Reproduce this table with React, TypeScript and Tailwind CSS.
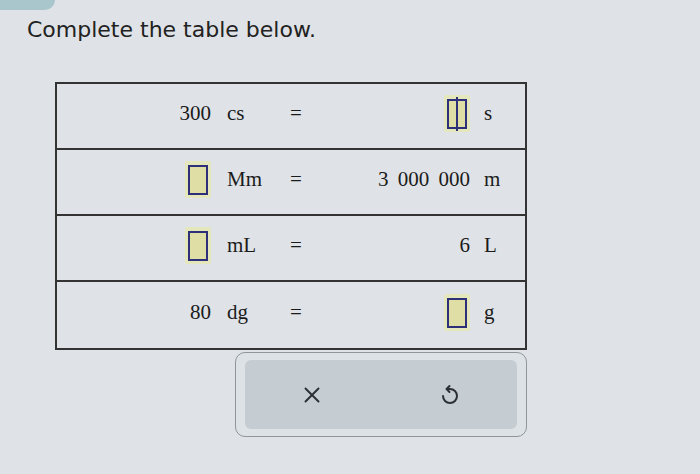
import { X } from 'lucide-react'

interface RowProps {
  leftValue: string | null
  leftUnit: string
  rightValue: string | null
  rightUnit: string
  dotted?: boolean
}

function AnswerBox({ dotted }: { dotted?: boolean }) {
  return (
    <span className="inline-flex items-center justify-center w-[26px] h-[37px] bg-[#e4e6bc] rounded-[2px]">
      <span className="relative block w-[20px] h-[30px] border-2 border-[#2d2f78] bg-[#dfdea4]">
        {dotted ? (
          <span className="absolute left-1/2 top-[-4px] bottom-[-4px] w-[2px] -translate-x-1/2 bg-[#2d2f78]" />
        ) : null}
      </span>
    </span>
  )
}

function UndoIcon() {
  return (
    <svg width="24" height="24" viewBox="0 0 24 24" fill="none" stroke="#2c3034" strokeWidth="2" strokeLinecap="round" strokeLinejoin="round">
      <path d="M9 6h3a7 7 0 1 1-7 7" />
      <path d="M11.5 3 8.5 6l3 3" />
    </svg>
  )
}

function Row({ leftValue, leftUnit, rightValue, rightUnit, dotted }: RowProps) {
  return (
    <div className="grid grid-cols-[154px_16px_47px_44px_152px_14px_1fr] items-center h-[66px] pb-[5px] border-b-2 border-[#333] last:border-b-0">
      <div className="flex justify-end">
        {leftValue ? <span>{leftValue}</span> : <AnswerBox />}
      </div>
      <div />
      <div>{leftUnit}</div>
      <div className="text-center">=</div>
      <div className="flex justify-end">
        {rightValue ? <span className="[word-spacing:4px]">{rightValue}</span> : <AnswerBox dotted={dotted} />}
      </div>
      <div />
      <div>{rightUnit}</div>
    </div>
  )
}

export default function App() {
  return (
    <div className="w-[700px] h-[474px] bg-[#dfe3e7] overflow-hidden relative">
      {/* cut-off tab at the top */}
      <div className="absolute left-0 top-[-20px] w-[55px] h-[30px] rounded-br-[10px] bg-[#a9c6cd]" />
      <h1 className="pt-[16px] pl-[27px] text-[22px] text-[#222] font-['DejaVu_Sans',sans-serif] leading-[28px]">
        Complete the table below.
      </h1>

      <div className="ml-[55px] mt-[38px] w-[472px] border-2 border-[#333] font-['Liberation_Serif',serif] text-[21px] text-[#1b1b1b]">
        <Row leftValue="300" leftUnit="cs" rightValue={null} rightUnit="s" dotted />
        <Row leftValue={null} leftUnit="Mm" rightValue="3 000 000" rightUnit="m" />
        <Row leftValue={null} leftUnit="mL" rightValue="6" rightUnit="L" />
        <Row leftValue="80" leftUnit="dg" rightValue={null} rightUnit="g" />
      </div>

      <div className="ml-[235px] mt-[2px] w-[292px] h-[85px] rounded-[10px] border-[1.5px] border-[#8e959b] bg-[#dde2e6] p-[7px_9px]">
        <div className="flex h-full rounded-[6px] bg-[#c5cdd3]">
          <div className="flex-1 flex items-center justify-center pr-[4px]">
            <X size={26} strokeWidth={1.8} className="text-[#2c3034]" />
          </div>
          <div className="flex-1 flex items-center justify-center">
            <UndoIcon />
          </div>
        </div>
      </div>
    </div>
  )
}
